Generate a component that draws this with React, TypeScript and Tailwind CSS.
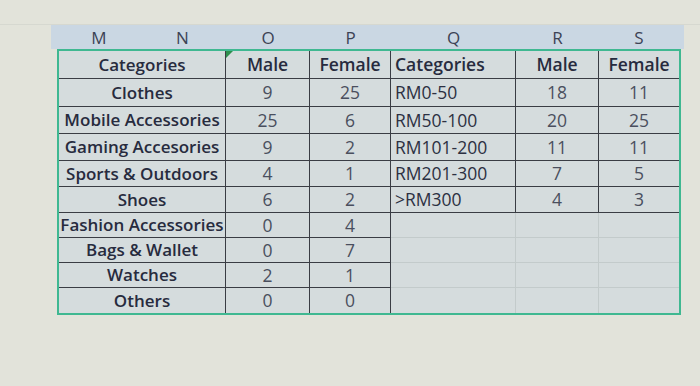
import React from "react";

const widths = [167, 84, 81, 125, 83, 80];
const heights = [28, 28, 27, 27, 26, 26, 25, 25, 25, 25];

const left: [string, string, string][] = [
  ["Categories", "Male", "Female"],
  ["Clothes", "9", "25"],
  ["Mobile Accessories", "25", "6"],
  ["Gaming Accesories", "9", "2"],
  ["Sports & Outdoors", "4", "1"],
  ["Shoes", "6", "2"],
  ["Fashion Accessories", "0", "4"],
  ["Bags & Wallet", "0", "7"],
  ["Watches", "2", "1"],
  ["Others", "0", "0"],
];

const right: [string, string, string][] = [
  ["Categories", "Male", "Female"],
  ["RM0-50", "18", "11"],
  ["RM50-100", "20", "25"],
  ["RM101-200", "11", "11"],
  ["RM201-300", "7", "5"],
  [">RM300", "4", "3"],
];

export default function App() {
  return (
    <div
      className="w-[700px] h-[386px] overflow-hidden bg-[#e2e3da] relative"
      style={{ fontFamily: '"Open Sans", "Noto Sans", sans-serif' }}
    >
      <div className="h-[25px] border-b border-[#d6d8d0]" />
      {/* column letters */}
      <div className="ml-[51px] w-[633px] h-[24px] bg-[#cad7e3] flex pl-[8px] text-[17px] text-[#3c4355] leading-[26px]">
        <div className="w-[80px] text-center">M</div>
        <div className="w-[87px] text-center">N</div>
        <div className="w-[84px] text-center">O</div>
        <div className="w-[81px] text-center">P</div>
        <div className="w-[125px] text-center">Q</div>
        <div className="w-[83px] text-center">R</div>
        <div className="w-[80px] text-center">S</div>
      </div>
      {/* table */}
      <div className="ml-[57px] w-[624px] border-2 border-[#3fb891] bg-[#d5dcdd] relative">
        <div
          className="grid"
          style={{
            gridTemplateColumns: widths.map((w) => `${w}px`).join(" "),
            gridTemplateRows: heights.map((h) => `${h}px`).join(" "),
          }}
        >
          {heights.map((_, r) => {
            const lastRow = r === heights.length - 1;
            const L = left[r];
            const R = right[r];
            const head = r === 0;
            const bb = lastRow ? "" : "border-b border-[#3a3d44]";
            const faint = "border-b border-[#c3cbcb]";
            return (
              <React.Fragment key={r}>
                <div
                  className={`${bb} border-r border-[#3a3d44] flex items-center justify-center text-[17px] font-semibold text-[#272b3e] whitespace-nowrap`}
                >
                  {L[0]}
                </div>
                <div
                  className={`${bb} border-r border-[#3a3d44] flex items-center justify-center text-[17.5px] whitespace-nowrap ${
                    head ? "font-semibold text-[#272b3e]" : "text-[#4a4f5e]"
                  }`}
                >
                  {L[1]}
                </div>
                <div
                  className={`${bb} border-r border-[#3a3d44] flex items-center justify-center text-[17.5px] whitespace-nowrap ${
                    head ? "font-semibold text-[#272b3e]" : "text-[#4a4f5e]"
                  }`}
                >
                  {L[2]}
                </div>
                {R ? (
                  <>
                    <div
                      className={`border-b border-r border-[#3a3d44] flex items-center pl-[4px] text-[17.5px] whitespace-nowrap ${
                        head ? "font-semibold text-[#272b3e]" : "text-[#2c3042]"
                      }`}
                    >
                      {R[0]}
                    </div>
                    <div
                      className={`border-b border-r border-[#3a3d44] flex items-center justify-center text-[17.5px] whitespace-nowrap ${
                        head ? "font-semibold text-[#272b3e]" : "text-[#4a4f5e]"
                      }`}
                    >
                      {R[1]}
                    </div>
                    <div
                      className={`border-b border-[#3a3d44] flex items-center justify-center text-[17.5px] whitespace-nowrap ${
                        head ? "font-semibold text-[#272b3e]" : "text-[#4a4f5e]"
                      }`}
                    >
                      {R[2]}
                    </div>
                  </>
                ) : (
                  <>
                    <div className={`${lastRow ? "" : faint} border-r border-[#c3cbcb]`} />
                    <div className={`${lastRow ? "" : faint} border-r border-[#c3cbcb]`} />
                    <div className={`${lastRow ? "" : faint}`} />
                  </>
                )}
              </React.Fragment>
            );
          })}
        </div>
        {/* excel error indicator */}
        <svg className="absolute left-[167px] top-0" width="7" height="7" viewBox="0 0 7 7">
          <polygon points="0,0 7,0 0,7" fill="#2f8f4e" />
        </svg>
      </div>
    </div>
  );
}
